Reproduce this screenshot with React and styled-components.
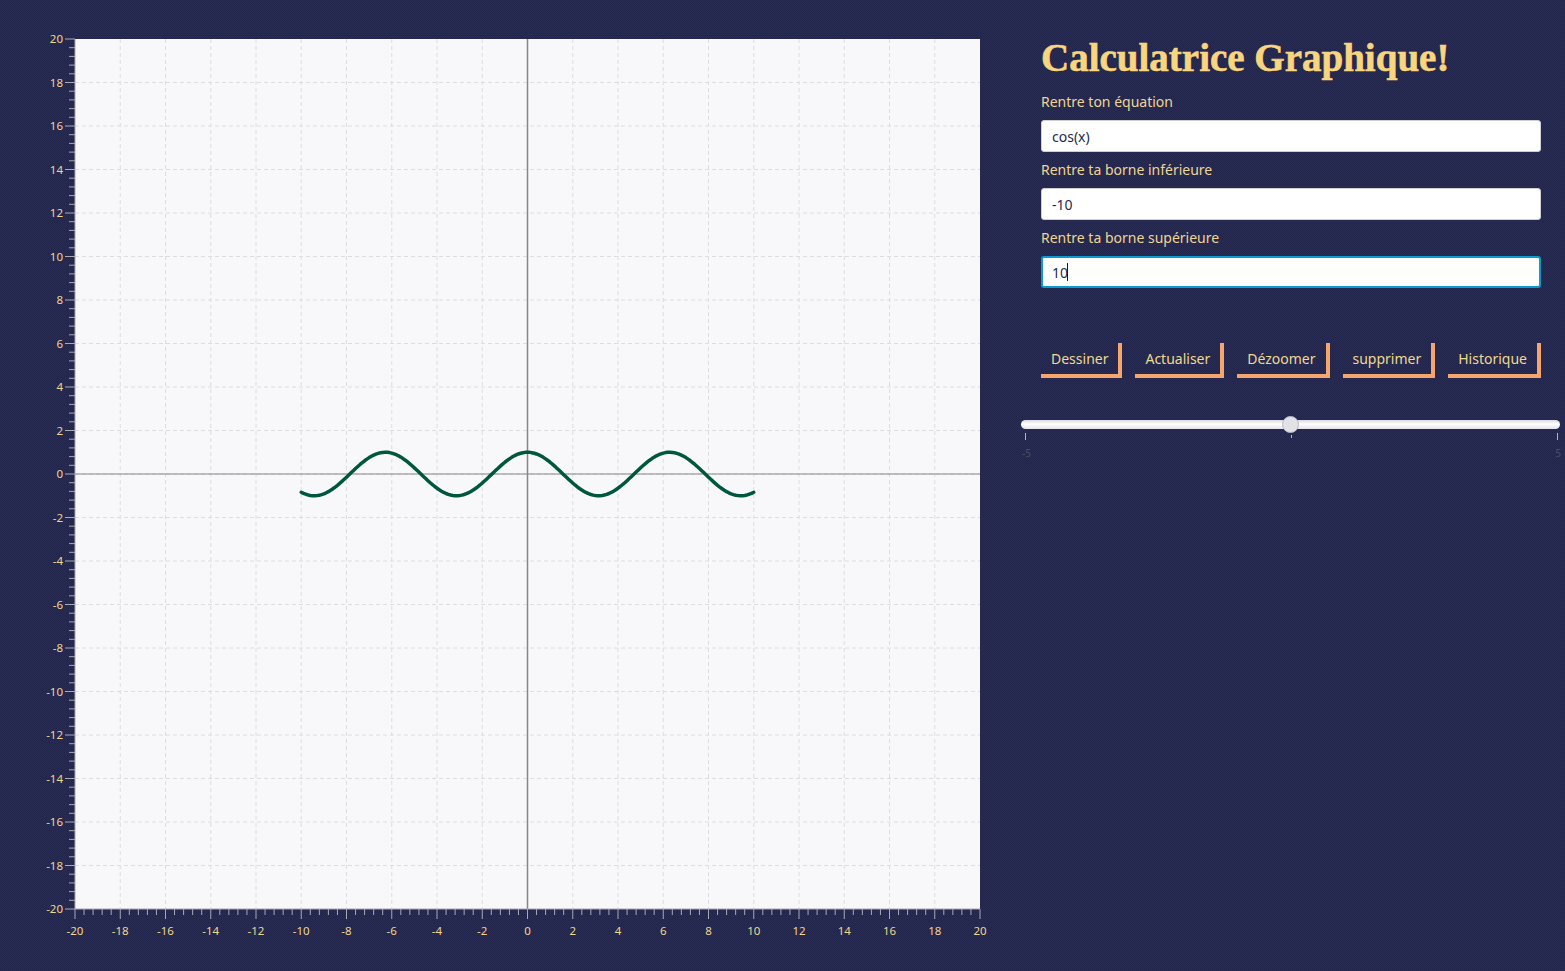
import React from "react";
import styled, { createGlobalStyle } from "styled-components";

const GlobalStyle = createGlobalStyle`
  html, body {
    margin: 0;
    padding: 0;
    height: 100%;
    overflow: hidden;
  }
  body {
    background-color: #26274f;
    background-image: conic-gradient(#2b2a52 25%, #22264c 0 50%, #2b2a52 0 75%, #22264c 0);
    background-size: 2px 2px;
    font-family: "Noto Sans", "Open Sans", sans-serif;
  }
`;

const Page = styled.div`
  display: flex;
  width: 1565px;
  height: 971px;
`;

const ChartBox = styled.svg`
  display: block;
  flex: none;
  width: 1021px;
  height: 971px;
`;

const Side = styled.div`
  display: flex;
  flex-direction: column;
  width: 540px;
`;

const Form = styled.div`
  display: flex;
  flex-direction: column;
  width: 500px;
  margin-left: 20px;
`;

const Title = styled.h1`
  margin: 35px 0 0;
  height: 45px;
  font-family: "Liberation Serif", serif;
  font-size: 39px;
  line-height: 45px;
  font-weight: 700;
  color: #f8d57e;
  -webkit-text-stroke: 0.6px #f8d57e;
  white-space: nowrap;
`;

const Label = styled.label`
  display: block;
  height: 20px;
  margin-top: ${(p) => p.$first ? "12px" : "8px"};
  margin-bottom: 8px;
  font-size: 14px;
  line-height: 20px;
  color: #efd594;
`;

const InputWrap = styled.div`
  position: relative;
`;

const Input = styled.input`
  display: block;
  box-sizing: border-box;
  width: 500px;
  height: 32px;
  padding: 0 10px;
  border: ${(p) => p.$focused ? "2px solid #0a9bd0" : "1px solid #cfcfd4"};
  padding-left: ${(p) => p.$focused ? "9px" : "10px"};
  border-radius: 3px;
  background: #fff;
  outline: none;
  font-family: inherit;
  font-size: 14px;
  color: #1f2a4d;
`;

const Caret = styled.span`
  position: absolute;
  left: 26px;
  top: 7px;
  width: 1px;
  height: 18px;
  background: #10162c;
`;

const Buttons = styled.div`
  display: flex;
  justify-content: space-between;
  margin-top: 55px;
`;

const Button = styled.button`
  box-sizing: border-box;
  height: 35px;
  padding: 0 ${(p) => p.$right || 10}px 0 10px;
  border: none;
  border-right: 4px solid #f6a56c;
  border-bottom: 4px solid #f6a56c;
  background: transparent;
  font-family: inherit;
  font-size: 14px;
  color: #efd98f;
`;

const Slider = styled.div`
  display: flex;
  flex-direction: column;
  margin-top: 38px;
`;

const Range = styled.input`
  appearance: none;
  display: block;
  width: 539px;
  height: 17px;
  margin: 0;
  background: transparent;

  &::-webkit-slider-runnable-track {
    height: 9px;
    border-radius: 5px;
    background: linear-gradient(#d8d8e0, #fff 45%, #e4e4ea);
  }
  &::-webkit-slider-thumb {
    appearance: none;
    width: 17px;
    height: 17px;
    margin-top: -4px;
    border-radius: 50%;
    border: 1px solid #b9b9c2;
    box-sizing: border-box;
    background: #e2e2e6;
  }
`;

const TickRow = styled.div`
  display: flex;
  align-items: flex-start;
  justify-content: space-between;
  padding: 0 3px 0 4px;
  height: 8px;
`;

const Tick = styled.span`
  width: 1px;
  height: ${(p) => p.$minor ? "3px" : "7px"};
  margin-top: ${(p) => p.$minor ? "2px" : "0"};
  background: #b4b4c0;
`;

const RangeLabels = styled.div`
  display: flex;
  justify-content: space-between;
  margin-top: 5px;
  padding: 0 0 0 1px;
  font-size: 10px;
  line-height: 14px;
  color: #4b4c66;
`;

const X0 = 527.5;
const Y0 = 474;
const SX = 22.625;
const SY = 21.75;
const px = (x) => X0 + x * SX;
const py = (y) => Y0 - y * SY;

const range = (from, to, step) => {
  const out = [];
  for (let v = from; v <= to + 1e-6; v += step) out.push(Number(v.toFixed(2)));
  return out;
};

const majors = range(-20, 20, 2);
const minors = range(-20, 20, 0.4).filter((v) => Math.abs(v / 2 - Math.round(v / 2)) > 0.01);

const curve = range(-10, 10, 0.1)
  .map((x) => `${px(x).toFixed(2)},${py(Math.cos(x)).toFixed(2)}`)
  .join(" ");

const Chart = () => (
  <ChartBox viewBox="0 0 1021 971">
    <rect x={px(-20)} y={py(20)} width={40 * SX} height={40 * SY} fill="#f8f8fb" />
    <g stroke="#dcdce2" strokeWidth="1" strokeDasharray="4 3">
      {majors.slice(1, -1).map((v) => (
        <line key={`gv${v}`} x1={px(v)} x2={px(v)} y1={py(20)} y2={py(-20)} />
      ))}
      {majors.slice(1, -1).map((v) => (
        <line key={`gh${v}`} x1={px(-20)} x2={px(20)} y1={py(v)} y2={py(v)} />
      ))}
    </g>
    <line x1={px(0)} x2={px(0)} y1={py(20)} y2={py(-20)} stroke="#85858a" strokeWidth="1.5" />
    <line x1={px(-20)} x2={px(20)} y1={py(0)} y2={py(0)} stroke="#85858a" strokeWidth="1" />
    <polyline points={curve} fill="none" stroke="#00573f" strokeWidth="3.5" strokeLinecap="round" strokeLinejoin="round" />
    <g stroke="#a9a9b4" strokeWidth="1">
      <line x1={px(-20)} x2={px(20)} y1={py(-20)} y2={py(-20)} />
      <line x1={px(-20)} x2={px(-20)} y1={py(20)} y2={py(-20)} />
      {majors.map((v) => (
        <line key={`tx${v}`} x1={px(v)} x2={px(v)} y1={py(-20)} y2={py(-20) + 10} />
      ))}
      {minors.map((v) => (
        <line key={`mx${v}`} x1={px(v)} x2={px(v)} y1={py(-20)} y2={py(-20) + 6} />
      ))}
      {majors.map((v) => (
        <line key={`ty${v}`} x1={px(-20) - 10} x2={px(-20)} y1={py(v)} y2={py(v)} />
      ))}
      {minors.map((v) => (
        <line key={`my${v}`} x1={px(-20) - 6} x2={px(-20)} y1={py(v)} y2={py(v)} />
      ))}
    </g>
    <g fill="#f0d68f" fontFamily="'Noto Sans', sans-serif" fontSize="11.5">
      {majors.map((v) => (
        <text key={`lx${v}`} x={px(v)} y={py(-20) + 26} textAnchor="middle">{v}</text>
      ))}
      {majors.map((v) => (
        <text key={`ly${v}`} x={px(-20) - 12} y={py(v) + 4} textAnchor="end">{v}</text>
      ))}
    </g>
  </ChartBox>
);

export default function App() {
  return (
    <Page>
      <GlobalStyle />
      <Chart />
      <Side>
        <Form>
          <Title>Calculatrice Graphique!</Title>
          <Label $first>Rentre ton équation</Label>
          <Input defaultValue="cos(x)" />
          <Label>Rentre ta borne inférieure</Label>
          <Input defaultValue="-10" />
          <Label>Rentre ta borne supérieure</Label>
          <InputWrap>
            <Input defaultValue="10" $focused />
            <Caret />
          </InputWrap>
          <Buttons>
            <Button>Dessiner</Button>
            <Button>Actualiser</Button>
            <Button>Dézoomer</Button>
            <Button>supprimer</Button>
            <Button>Historique</Button>
          </Buttons>
        </Form>
        <Slider>
          <Range type="range" min="-5" max="5" step="0.1" defaultValue="0" />
          <TickRow>
            <Tick />
            <Tick $minor />
            <Tick />
          </TickRow>
          <RangeLabels>
            <span>-5</span>
            <span>5</span>
          </RangeLabels>
        </Slider>
      </Side>
    </Page>
  );
}
